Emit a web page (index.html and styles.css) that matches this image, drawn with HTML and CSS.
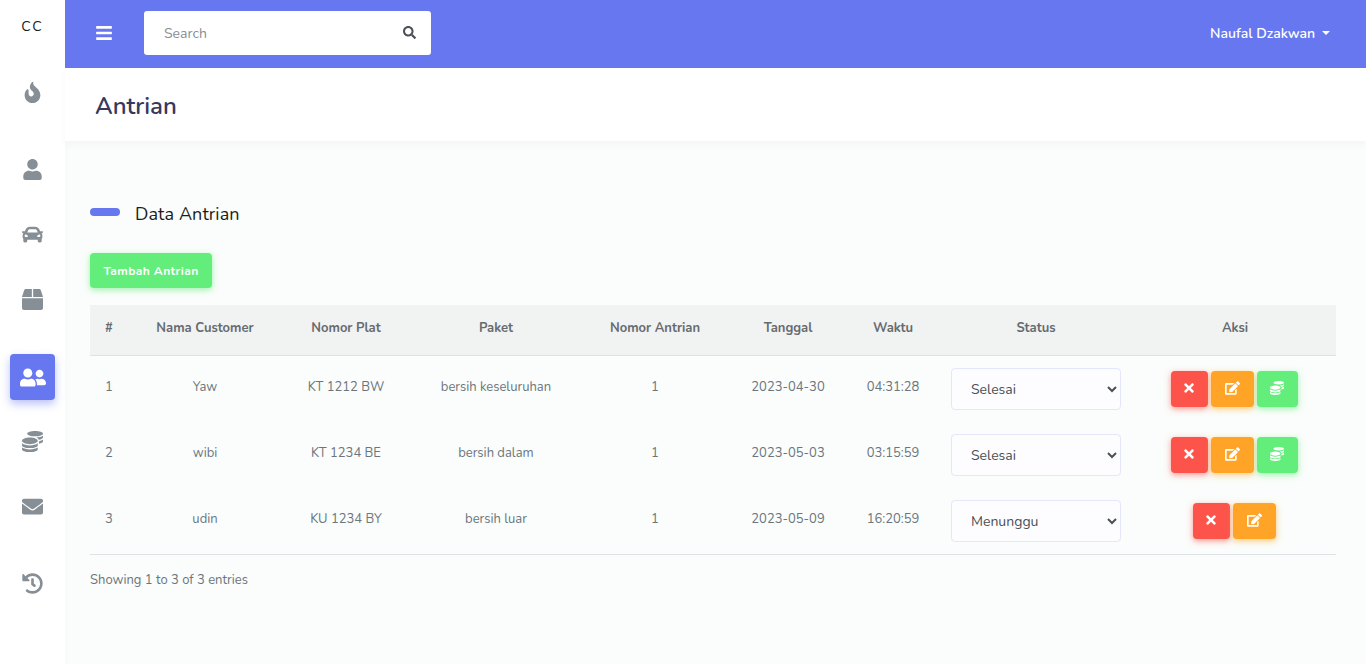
FILE: index.html
```html
<!DOCTYPE html>
<html lang="en">
<head>
    <meta charset="UTF-8">
    <meta name="viewport" content="width=device-width, initial-scale=1.0">
    <title>Antrian</title>
    <link rel="stylesheet" href="styles.css">
</head>
<body>
    <svg class="icon-defs" aria-hidden="true">
        <symbol id="i-fire" viewBox="0 0 384 512"><path d="M216 23.86c0-23.8-30.65-32.77-44.15-13.04C48 191.85 224 200 224 288c0 35.63-29.11 64.46-64.85 63.99-35.17-.45-63.15-29.77-63.15-64.94v-85.51c0-21.7-26.47-32.23-41.43-16.5C27.8 213.16 0 261.33 0 320c0 105.87 86.13 192 192 192s192-86.13 192-192c0-170.29-176-193-176-296.14z"/></symbol>
        <symbol id="i-user" viewBox="0 0 448 512"><path d="M224 256c70.7 0 128-57.3 128-128S294.7 0 224 0 96 57.3 96 128s57.3 128 128 128zm89.6 32h-16.7c-22.2 10.2-46.9 16-72.9 16s-50.6-5.8-72.9-16h-16.7C60.2 288 0 348.2 0 422.4V464c0 26.5 21.5 48 48 48h352c26.5 0 48-21.5 48-48v-41.6c0-74.2-60.2-134.4-134.4-134.4z"/></symbol>
        <symbol id="i-car" viewBox="0 0 512 512"><path d="M499.99 176h-59.87l-16.64-41.6C406.38 91.63 365.57 64 319.5 64h-127c-46.06 0-86.88 27.63-103.99 70.4L71.87 176H12.01C4.2 176-1.53 183.34.37 190.91l6 24C7.7 220.25 12.5 224 18.01 224h20.07C24.65 235.73 16 252.78 16 272v48c0 16.12 6.16 30.67 16 41.93V416c0 17.67 14.33 32 32 32h32c17.67 0 32-14.33 32-32v-32h256v32c0 17.67 14.33 32 32 32h32c17.67 0 32-14.33 32-32v-54.07c9.84-11.25 16-25.8 16-41.93v-48c0-19.22-8.65-36.27-22.07-48H494c5.51 0 10.31-3.75 11.64-9.09l6-24c1.89-7.57-3.84-14.91-11.65-14.91zm-352.06-17.83c7.29-18.22 24.94-30.17 44.57-30.17h127c19.63 0 37.28 11.95 44.57 30.17L384 208H128l19.93-49.83zM96 319.8c-19.2 0-32-12.76-32-31.9S76.8 256 96 256s48 28.71 48 47.85-28.8 15.95-48 15.95zm320 0c-19.2 0-48 3.19-48-15.95S396.8 256 416 256s32 12.76 32 31.9-12.8 31.9-32 31.9z"/></symbol>
        <symbol id="i-box" viewBox="0 0 512 512"><path d="M509.5 184.6L458.9 32.8C452.4 13.2 434.1 0 413.4 0H272v192h238.7c-.4-2.5-.4-5-1.2-7.4zM240 0H98.6c-20.7 0-39 13.2-45.5 32.8L2.5 184.6c-.8 2.4-.8 4.9-1.2 7.4H240V0zM0 224v240c0 26.5 21.5 48 48 48h416c26.5 0 48-21.5 48-48V224H0z"/></symbol>
        <symbol id="i-friends" viewBox="0 0 640 512"><path d="M192 256c61.9 0 112-50.1 112-112S253.9 32 192 32 80 82.1 80 144s50.1 112 112 112zm76.8 32h-8.3c-20.8 10-43.9 16-68.5 16s-47.6-6-68.5-16h-8.3C51.6 288 0 339.6 0 403.2V432c0 26.5 21.5 48 48 48h288c26.5 0 48-21.5 48-48v-28.8c0-63.6-51.6-115.2-115.2-115.2zM480 256c53 0 96-43 96-96s-43-96-96-96-96 43-96 96 43 96 96 96zm48 32h-3.8c-13.9 4.8-28.6 8-44.2 8s-30.3-3.2-44.2-8H432c-20.4 0-39.2 5.9-55.7 15.4 24.4 26.3 39.7 61.2 39.7 99.8v38.4c0 2.2-.5 4.3-.6 6.4H592c26.5 0 48-21.5 48-48 0-61.9-50.1-112-112-112z"/></symbol>
        <symbol id="i-coins" viewBox="0 0 512 512"><path d="M0 405.3V448c0 35.3 86 64 192 64s192-28.7 192-64v-42.7C342.7 434.4 267.2 448 192 448S41.3 434.4 0 405.3zM320 128c106 0 192-28.7 192-64S426 0 320 0 128 28.7 128 64s86 64 192 64zM0 300.4V352c0 35.3 86 64 192 64s192-28.7 192-64v-51.6c-41.3 34-116.9 51.6-192 51.6S41.3 334.4 0 300.4zm416 11c57.3-11.1 96-31.7 96-55.4v-42.7c-23.2 16.4-57.3 27.6-96 34.5v63.6zM192 160C86 160 0 195.8 0 240s86 80 192 80 192-35.8 192-80-86-80-192-80zm219.3 56.3c60-10.8 100.7-32 100.7-56.3v-42.7c-35.5 25.1-96.5 38.6-160.7 41.8 29.5 14.3 51.2 33.5 60 57.2z"/></symbol>
        <symbol id="i-envelope" viewBox="0 0 512 512"><path d="M502.3 190.8c3.9-3.1 9.7-.2 9.7 4.7V400c0 26.5-21.5 48-48 48H48c-26.5 0-48-21.5-48-48V195.6c0-5 5.7-7.8 9.7-4.7 22.4 17.4 52.1 39.5 154.1 113.6 21.1 15.4 56.7 47.8 92.2 47.6 35.7.3 72-32.8 92.3-47.6 102-74.1 131.6-96.3 154-113.7zM256 320c23.2.4 56.6-29.2 73.4-41.4 132.7-96.3 142.8-104.7 173.4-128.7 5.8-4.5 9.2-11.5 9.2-18.9v-19c0-26.5-21.5-48-48-48H48C21.5 64 0 85.5 0 112v19c0 7.4 3.4 14.3 9.2 18.9 30.6 23.9 40.7 32.4 173.4 128.7 16.8 12.2 50.2 41.8 73.4 41.4z"/></symbol>
        <symbol id="i-history" viewBox="0 0 512 512"><path d="M504 255.531c.253 136.64-111.18 248.372-247.82 248.468-59.015.042-113.223-20.53-155.822-54.911-11.077-8.94-11.905-25.541-1.839-35.607l11.267-11.267c8.609-8.609 22.353-9.551 31.891-1.984C173.062 425.135 212.781 440 256 440c101.705 0 184-82.311 184-184 0-101.705-82.311-184-184-184-48.814 0-93.149 18.969-126.068 49.932l50.754 50.754c10.08 10.08 2.941 27.314-11.313 27.314H24c-8.837 0-16-7.163-16-16V38.627c0-14.254 17.234-21.393 27.314-11.314l49.372 49.372C129.209 34.136 189.552 8 256 8c136.81 0 247.747 110.78 248 247.531zm-180.912 78.784l9.823-12.63c8.138-10.463 6.253-25.542-4.21-33.679L288 256.349V152c0-13.255-10.745-24-24-24h-16c-13.255 0-24 10.745-24 24v135.651l65.409 50.874c10.463 8.137 25.541 6.253 33.679-4.21z"/></symbol>
        <symbol id="i-times" viewBox="0 0 352 512"><path d="M242.72 256l100.07-100.07c12.28-12.28 12.28-32.19 0-44.48l-22.24-22.24c-12.28-12.28-32.19-12.28-44.48 0L176 189.28 75.93 89.21c-12.28-12.28-32.19-12.28-44.48 0L9.21 111.45c-12.28 12.28-12.28 32.19 0 44.48L109.28 256 9.21 356.07c-12.28 12.28-12.28 32.19 0 44.48l22.24 22.24c12.28 12.28 32.2 12.28 44.48 0L176 322.72l100.07 100.07c12.28 12.28 32.2 12.28 44.48 0l22.24-22.24c12.28-12.28 12.28-32.19 0-44.48L242.72 256z"/></symbol>
        <symbol id="i-edit" viewBox="0 0 576 512"><path d="M402.6 83.2l90.2 90.2c3.8 3.8 3.8 10 0 13.8L274.4 405.6l-92.8 10.3c-12.4 1.4-22.9-9.1-21.5-21.5l10.3-92.8L388.8 83.2c3.8-3.8 10-3.8 13.8 0zm162-22.9l-48.8-48.8c-15.2-15.2-39.9-15.2-55.2 0l-35.4 35.4c-3.8 3.8-3.8 10 0 13.8l90.2 90.2c3.8 3.8 10 3.8 13.8 0l35.4-35.4c15.2-15.3 15.2-40 0-55.2zM384 346.2V448H64V128h229.8c3.2 0 6.2-1.3 8.5-3.5l40-40c7.6-7.6 2.2-20.5-8.5-20.5H48C21.5 64 0 85.5 0 112v352c0 26.5 21.5 48 48 48h352c26.5 0 48-21.5 48-48V306.2c0-10.7-12.9-16-20.5-8.5l-40 40c-2.2 2.3-3.5 5.3-3.5 8.5z"/></symbol>
        <symbol id="i-search" viewBox="0 0 512 512"><path d="M505 442.7L405.3 343c-4.5-4.5-10.6-7-17-7H372c27.6-35.3 44-79.7 44-128C416 93.1 322.9 0 208 0S0 93.1 0 208s93.1 208 208 208c48.3 0 92.7-16.4 128-44v16.3c0 6.4 2.5 12.5 7 17l99.7 99.7c9.4 9.4 24.6 9.4 33.9 0l28.3-28.3c9.4-9.4 9.4-24.6.1-34zM208 336c-70.7 0-128-57.2-128-128 0-70.7 57.2-128 128-128 70.7 0 128 57.2 128 128 0 70.7-57.2 128-128 128z"/></symbol>
        <symbol id="i-bars" viewBox="0 0 448 512"><path d="M16 132h416c8.837 0 16-7.163 16-16V76c0-8.837-7.163-16-16-16H16C7.163 60 0 67.163 0 76v40c0 8.837 7.163 16 16 16zm0 160h416c8.837 0 16-7.163 16-16v-40c0-8.837-7.163-16-16-16H16c-8.837 0-16 7.163-16 16v40c0 8.837 7.163 16 16 16zm0 160h416c8.837 0 16-7.163 16-16v-40c0-8.837-7.163-16-16-16H16c-8.837 0-16 7.163-16 16v40c0 8.837 7.163 16 16 16z"/></symbol>
    </svg>

    <div class="app">
        <aside class="sidebar">
            <div class="brand">CC</div>
            <a class="side-link" href="#"><svg class="side-icon"><use href="#i-fire"/></svg></a>
            <div class="side-group group-master">
                <a class="side-link" href="#"><svg class="side-icon"><use href="#i-user"/></svg></a>
                <a class="side-link" href="#"><svg class="side-icon"><use href="#i-car"/></svg></a>
                <a class="side-link" href="#"><svg class="side-icon"><use href="#i-box"/></svg></a>
            </div>
            <div class="side-group group-trans">
                <a class="side-link active" href="#"><svg class="side-icon wide"><use href="#i-friends"/></svg></a>
                <a class="side-link" href="#"><svg class="side-icon"><use href="#i-coins"/></svg></a>
                <a class="side-link" href="#"><svg class="side-icon"><use href="#i-envelope"/></svg></a>
            </div>
            <div class="side-group group-log">
                <a class="side-link" href="#"><svg class="side-icon"><use href="#i-history"/></svg></a>
            </div>
        </aside>

        <div class="main">
            <nav class="topbar">
                <a class="menu-toggle" href="#"><svg class="bars-icon"><use href="#i-bars"/></svg></a>
                <form class="search-box">
                    <input type="text" placeholder="Search">
                    <button type="button"><svg class="search-icon"><use href="#i-search"/></svg></button>
                </form>
                <a class="user-menu" href="#">Naufal Dzakwan</a>
            </nav>

            <header class="page-header">
                <h1>Antrian</h1>
            </header>

            <section class="content">
                <div class="card-title">
                    <span class="title-bar"></span>
                    <h2>Data Antrian</h2>
                </div>

                <button class="btn-add" type="button">Tambah Antrian</button>

                <table class="data-table">
                    <thead>
                        <tr>
                            <th class="col-no"><span>#</span></th>
                            <th class="col-name"><span>Nama Customer</span></th>
                            <th class="col-plate"><span>Nomor Plat</span></th>
                            <th class="col-package"><span>Paket</span></th>
                            <th class="col-queue"><span>Nomor Antrian</span></th>
                            <th class="col-date"><span>Tanggal</span></th>
                            <th class="col-time"><span>Waktu</span></th>
                            <th class="col-status"><span>Status</span></th>
                            <th><span>Aksi</span></th>
                        </tr>
                    </thead>
                    <tbody>
                        <tr>
                            <td><span>1</span></td>
                            <td><span>Yaw</span></td>
                            <td><span>KT 1212 BW</span></td>
                            <td><span>bersih keseluruhan</span></td>
                            <td><span>1</span></td>
                            <td><span>2023-04-30</span></td>
                            <td><span>04:31:28</span></td>
                            <td>
                                <select class="status-select">
                                    <option selected>Selesai</option>
                                    <option>Menunggu</option>
                                </select>
                            </td>
                            <td>
                                <div class="actions">
                                    <a class="btn-icon red" href="#"><svg class="times-icon"><use href="#i-times"/></svg></a>
                                    <a class="btn-icon orange" href="#"><svg class="edit-icon"><use href="#i-edit"/></svg></a>
                                    <a class="btn-icon green" href="#"><svg class="coins-icon"><use href="#i-coins"/></svg></a>
                                </div>
                            </td>
                        </tr>
                        <tr>
                            <td><span>2</span></td>
                            <td><span>wibi</span></td>
                            <td><span>KT 1234 BE</span></td>
                            <td><span>bersih dalam</span></td>
                            <td><span>1</span></td>
                            <td><span>2023-05-03</span></td>
                            <td><span>03:15:59</span></td>
                            <td>
                                <select class="status-select">
                                    <option selected>Selesai</option>
                                    <option>Menunggu</option>
                                </select>
                            </td>
                            <td>
                                <div class="actions">
                                    <a class="btn-icon red" href="#"><svg class="times-icon"><use href="#i-times"/></svg></a>
                                    <a class="btn-icon orange" href="#"><svg class="edit-icon"><use href="#i-edit"/></svg></a>
                                    <a class="btn-icon green" href="#"><svg class="coins-icon"><use href="#i-coins"/></svg></a>
                                </div>
                            </td>
                        </tr>
                        <tr>
                            <td><span>3</span></td>
                            <td><span>udin</span></td>
                            <td><span>KU 1234 BY</span></td>
                            <td><span>bersih luar</span></td>
                            <td><span>1</span></td>
                            <td><span>2023-05-09</span></td>
                            <td><span>16:20:59</span></td>
                            <td>
                                <select class="status-select">
                                    <option>Selesai</option>
                                    <option selected>Menunggu</option>
                                </select>
                            </td>
                            <td>
                                <div class="actions">
                                    <a class="btn-icon red" href="#"><svg class="times-icon"><use href="#i-times"/></svg></a>
                                    <a class="btn-icon orange" href="#"><svg class="edit-icon"><use href="#i-edit"/></svg></a>
                                </div>
                            </td>
                        </tr>
                    </tbody>
                </table>

                <p class="table-info">Showing 1 to 3 of 3 entries</p>
            </section>
        </div>
    </div>
</body>
</html>
```

FILE: styles.css
```css
body {
    margin: 0;
    background-color: #fafdfb;
    color: #6c757d;
    font-family: 'Nunito', 'Lato', 'Noto Sans', sans-serif;
    font-size: 14px;
    overflow: hidden;
}

.icon-defs {
    display: none;
}

.app {
    display: flex;
    height: 664px;
}

/* Sidebar */
.sidebar {
    flex: 0 0 65px;
    background-color: #ffffff;
    box-shadow: 0 4px 8px rgba(0, 0, 0, 0.03);
}

.brand {
    height: 60px;
    padding-top: 18px;
    box-sizing: border-box;
    text-align: center;
    font-size: 14px;
    line-height: 18px;
    letter-spacing: 2px;
    color: #191d21;
}

.side-link {
    display: flex;
    align-items: center;
    justify-content: center;
    height: 65px;
    color: #868e96;
    position: relative;
}

.side-icon {
    width: 21px;
    height: 21px;
    fill: currentColor;
}

.side-icon.wide {
    width: 26px;
}

.group-master {
    margin-top: 12px;
}

.group-trans {
    margin-top: 13px;
}

.group-trans .side-link {
    height: 64.5px;
}

.group-log {
    margin-top: 12px;
}

.side-link.active {
    color: #ffffff;
}

.side-link.active::before {
    content: "";
    position: absolute;
    left: 10px;
    right: 10px;
    top: 9px;
    height: 46px;
    background-color: #6777ef;
    border-radius: 4px;
    box-shadow: 0 4px 8px rgba(103, 119, 239, 0.45);
}

.side-link.active svg {
    position: relative;
}

/* Top bar */
.main {
    flex: 1;
    min-width: 0;
}

.topbar {
    display: flex;
    align-items: center;
    height: 68px;
    padding: 0 36px 2px 31px;
    box-sizing: border-box;
    background-color: #6777ef;
}

.menu-toggle {
    display: flex;
    color: #ffffff;
    margin-right: 32px;
}

.bars-icon {
    width: 16px;
    height: 18px;
    fill: currentColor;
}

.search-box {
    display: flex;
    align-items: center;
    width: 287px;
    height: 44px;
    background-color: #ffffff;
    border-radius: 3px;
}

.search-box input {
    flex: 1;
    min-width: 0;
    border: none;
    outline: none;
    padding: 0 0 0 20px;
    font-family: inherit;
    font-size: 14px;
    background: transparent;
}

.search-box input::placeholder {
    color: #868e96;
}

.search-box button {
    display: flex;
    padding: 0 15px;
    border: none;
    background: none;
}

.search-icon {
    width: 13px;
    height: 13px;
    margin-top: -2px;
    fill: #495057;
}

.user-menu {
    margin-left: auto;
    color: #ffffff;
    font-size: 14px;
    font-weight: 600;
    text-decoration: none;
}

.user-menu::after {
    content: "";
    display: inline-block;
    margin-left: 7px;
    vertical-align: 3px;
    border-top: 4px solid #ffffff;
    border-left: 4px solid transparent;
    border-right: 4px solid transparent;
}

/* Page header */
.page-header {
    display: flex;
    align-items: center;
    height: 73px;
    padding: 2px 0 0 30px;
    box-sizing: border-box;
    background-color: #ffffff;
    box-shadow: 0 4px 8px rgba(0, 0, 0, 0.03);
}

.page-header h1 {
    margin: 0;
    font-size: 24px;
    font-weight: 600;
    color: #34395e;
}

/* Content */
.content {
    padding: 61px 30px 0 25px;
}

.card-title {
    display: flex;
    align-items: center;
    gap: 15px;
}

.title-bar {
    width: 30px;
    height: 8px;
    margin-top: -4px;
    background-color: #6777ef;
    border-radius: 4px;
}

.card-title h2 {
    margin: 0;
    font-size: 18px;
    line-height: 24px;
    font-weight: 400;
    letter-spacing: 0.1px;
    color: #191d21;
}

.btn-add {
    display: block;
    margin: 27px 0 17px;
    width: 122px;
    height: 35px;
    padding: 0;
    border: none;
    border-radius: 4px;
    background-color: #63ed7a;
    box-shadow: 0 2px 6px rgba(99, 237, 122, 0.6);
    color: #ffffff;
    font-family: inherit;
    font-size: 12px;
    font-weight: 700;
    letter-spacing: 0.4px;
}

/* Table */
.data-table {
    width: 1246px;
    table-layout: fixed;
    border-collapse: collapse;
    text-align: center;
    border-bottom: 1px solid #dee2e6;
    font-size: 13px;
}

.data-table th {
    height: 50px;
    padding: 0;
    background-color: #f1f2f2;
    border-bottom: 1px solid #dee2e6;
    font-weight: 700;
    color: #666b70;
}

.col-no { width: 38px; }
.col-name { width: 154px; }
.col-plate { width: 128px; }
.col-package { width: 172px; }
.col-queue { width: 146px; }
.col-date { width: 120px; }
.col-time { width: 90px; }
.col-status { width: 196px; }

.data-table td {
    height: 66px;
    padding: 0;
}

.data-table th span,
.data-table td span {
    position: relative;
    top: -2px;
}

.status-select {
    width: 170px;
    height: 42px;
    padding: 0 15px;
    background-color: #fdfdff;
    border: 1px solid #e4e6fc;
    border-radius: 4px;
    color: #495057;
    font-family: inherit;
    font-size: 14px;
    outline: none;
    vertical-align: middle;
}

.actions {
    display: flex;
    justify-content: center;
    gap: 3px;
    padding-right: 2px;
}

.btn-icon {
    display: flex;
    align-items: center;
    justify-content: center;
    height: 36px;
    border-radius: 4px;
    color: #ffffff;
}

.btn-icon.red {
    width: 37px;
    background-color: #fc544b;
    box-shadow: 0 2px 6px rgba(252, 84, 75, 0.6);
}

.btn-icon.orange {
    width: 43px;
    background-color: #ffa426;
    box-shadow: 0 2px 6px rgba(255, 164, 38, 0.6);
}

.btn-icon.green {
    width: 41px;
    background-color: #63ed7a;
    box-shadow: 0 2px 6px rgba(99, 237, 122, 0.6);
}

.btn-icon svg {
    fill: currentColor;
    height: 14px;
    margin-top: -2px;
}

.times-icon { width: 10px; }
.edit-icon { width: 15px; }
.coins-icon { width: 14px; }

.table-info {
    margin: 17px 0 0;
    font-size: 13px;
    line-height: 16px;
    color: #6c757d;
}
```
